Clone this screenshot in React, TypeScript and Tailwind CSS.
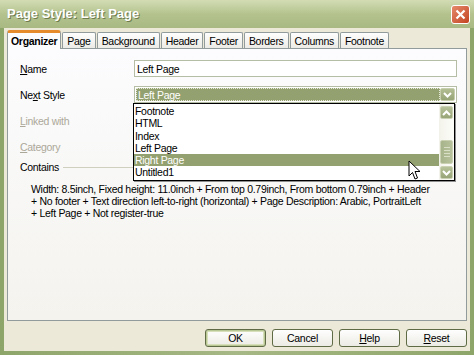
import React from "react";

// Olive XP style dialog: "Page Style: Left Page"

const tabs = ["Organizer", "Page", "Background", "Header", "Footer", "Borders", "Columns", "Footnote"];
const styles = ["Footnote", "HTML", "Index", "Left Page", "Right Page", "Untitled1"];

const Chevron: React.FC<{ up?: boolean }> = ({ up }) => (
  <svg width="9" height="6" viewBox="0 0 9 6">
    <path
      d={up ? "M1 5 L4.5 1.5 L8 5" : "M1 1 L4.5 4.5 L8 1"}
      fill="none"
      stroke="#ffffff"
      strokeWidth="2"
    />
  </svg>
);

const ScrollButton: React.FC<{ up?: boolean }> = ({ up }) => (
  <div className="w-[13px] h-[13px] rounded-[2px] border border-[#c9d1b2] bg-gradient-to-b from-[#b7c29a] to-[#98a577] flex items-center justify-center">
    <Chevron up={up} />
  </div>
);

const Label: React.FC<{ text: string; u: number; disabled?: boolean }> = ({ text, u, disabled }) => (
  <span className={disabled ? "text-[#aca899]" : "text-black"}>
    {text.slice(0, u)}
    <span className="underline">{text.charAt(u)}</span>
    {text.slice(u + 1)}
  </span>
);

const Button: React.FC<{ children: React.ReactNode; primary?: boolean }> = ({ children, primary }) => (
  <div
    className={`w-[61px] h-[18px] rounded-[3px] border border-[#5e6b45] bg-gradient-to-b from-[#fefefe] to-[#ecebe4] flex items-center justify-center ${
      primary ? "shadow-[inset_0_0_0_1px_#b9c795,inset_0_0_0_2px_#d6dfba]" : ""
    }`}
  >
    {children}
  </div>
);

export default function App() {
  return (
    <div
      className="w-[474px] h-[355px] bg-gradient-to-r from-[#8ea56a] via-[#a6b885] to-[#8ea56a] flex flex-col text-[10.5px] tracking-[-0.3px] leading-[12px] overflow-hidden"
      style={{ fontFamily: '"Liberation Sans", Arial, sans-serif' }}
    >
      {/* Title bar */}
      <div className="h-[28px] bg-gradient-to-b from-[#d3dcb4] via-[#b4c38e] to-[#a9b983] flex items-center justify-between pl-[7px] pr-[4px] shrink-0">
        <span
          className="text-white font-bold text-[13px] tracking-normal"
          style={{ textShadow: "1px 1px 0 #6d7b4e" }}
        >
          Page Style: Left Page
        </span>
        <div className="w-[19px] h-[19px] rounded-[3px] border border-white bg-gradient-to-br from-[#e58a6a] to-[#c2421f] flex items-center justify-center mt-[1px]">
          <svg width="11" height="11" viewBox="0 0 11 11">
            <path d="M1.5 1.5 L9.5 9.5 M9.5 1.5 L1.5 9.5" stroke="#ffffff" strokeWidth="2.2" />
          </svg>
        </div>
      </div>

      {/* Client area */}
      <div className="flex-1 mx-[4px] mb-[4px] bg-[#ece9d8] flex flex-col">
        {/* Tabs */}
        <div className="flex items-end pl-[3px] pt-[3px] h-[20px] gap-[1px]">
          {tabs.map((t, i) =>
            i === 0 ? (
              <div
                key={t}
                className="h-[19px] px-[3px] bg-[#fcfcfe] border-x border-[#919b9c] border-t-[3px] border-t-[#e68b2c] rounded-t-[3px] font-bold flex items-center -mb-[1px] z-10"
              >
                {t}
              </div>
            ) : (
              <div
                key={t}
                className="h-[16px] px-[4px] bg-gradient-to-b from-[#fefefe] to-[#ecebe6] border border-b-0 border-[#919b9c] rounded-t-[2px] flex items-center"
              >
                {t}
              </div>
            )
          )}
        </div>

        {/* Panel */}
        <div className="relative h-[273px] mx-[3px] border border-[#919b9c] bg-gradient-to-b from-[#fcfcfe] to-[#f4f3ee] pl-[12px] pr-[9px] pt-[11px]">
          <div className="flex flex-col gap-[9px]">
            <div className="flex items-center h-[17px]">
              <div className="w-[114px]">
                <Label text="Name" u={0} />
              </div>
              <div className="flex-1 h-[17px] border border-[#b5bda5] bg-white flex items-center pl-[2px]">
                Left Page
              </div>
            </div>
            <div className="flex items-center h-[17px]">
              <div className="w-[114px]">
                <Label text="Next Style" u={2} />
              </div>
              <div className="flex-1 h-[17px] border border-[#b5bda5] bg-white flex items-center p-[1px]">
                <div className="flex-1 h-full bg-[#93a070] text-white border border-dotted border-[#e7ead8] flex items-center pl-[1px]">
                  Left Page
                </div>
                <div className="w-[15px] h-full rounded-[2px] border border-[#c6ceae] bg-gradient-to-b from-[#b2be93] to-[#97a476] flex items-center justify-center">
                  <Chevron />
                </div>
              </div>
            </div>
            <div className="flex items-center h-[17px]">
              <Label text="Linked with" u={0} disabled />
            </div>
            <div className="flex items-center h-[17px]">
              <Label text="Category" u={0} disabled />
            </div>
          </div>

          <div className="flex items-center mt-[6px] h-[12px]">
            <span>Contains</span>
            <div className="w-[74px] h-px bg-[#d0d0bf] ml-[4px]" />
          </div>
          <div className="pl-[11px] pt-[10px] whitespace-nowrap">
            Width: 8.5inch, Fixed height: 11.0inch + From top 0.79inch, From bottom 0.79inch + Header
            <br />+ No footer + Text direction left-to-right (horizontal) + Page Description: Arabic, PortraitLeft
            <br />+ Left Page + Not register-true
          </div>

          {/* Open dropdown list */}
          <div className="absolute left-[125px] top-[54px] w-[322px] h-[78px] bg-white border border-black flex shadow-[1px_1px_0_#8f8f8f]">
            <div className="flex-1 flex flex-col pt-[1px]">
              {styles.map((s) => (
                <div
                  key={s}
                  className={`h-[12.3px] leading-[12.3px] pl-[1px] ${s === "Right Page" ? "bg-[#93a070] text-white" : ""}`}
                >
                  {s}
                </div>
              ))}
            </div>
            <div className="w-[15px] bg-gradient-to-r from-[#f3f2ea] to-[#fdfdfa] flex flex-col items-center pt-[2px] pb-[1px]">
              <ScrollButton up />
              <div className="flex-1 w-full flex flex-col justify-end items-center pb-[2px]">
                <div className="w-[13px] h-[24px] rounded-[2px] border border-[#c9d1b2] bg-gradient-to-r from-[#a7b38a] to-[#b7c29c] flex flex-col items-center justify-center gap-[2px]">
                  <div className="w-[6px] h-px bg-[#d8dfc6]" />
                  <div className="w-[6px] h-px bg-[#d8dfc6]" />
                  <div className="w-[6px] h-px bg-[#d8dfc6]" />
                  <div className="w-[6px] h-px bg-[#d8dfc6]" />
                </div>
              </div>
              <ScrollButton />
            </div>
          </div>

          {/* Mouse cursor */}
          <svg className="absolute left-[400px] top-[111px]" width="13" height="21" viewBox="0 0 13 21">
            <path d="M1 1 L1 16 L4.5 12.5 L7 19 L9.5 18 L7 11.5 L12 11.5 Z" fill="#ffffff" stroke="#000000" strokeWidth="1" />
          </svg>
        </div>

        {/* Buttons */}
        <div className="flex justify-end gap-[6px] pr-[3px] pt-[8px]">
          <Button primary>OK</Button>
          <Button>Cancel</Button>
          <Button>
            <Label text="Help" u={0} />
          </Button>
          <Button>
            <Label text="Reset" u={0} />
          </Button>
        </div>
      </div>
    </div>
  );
}
